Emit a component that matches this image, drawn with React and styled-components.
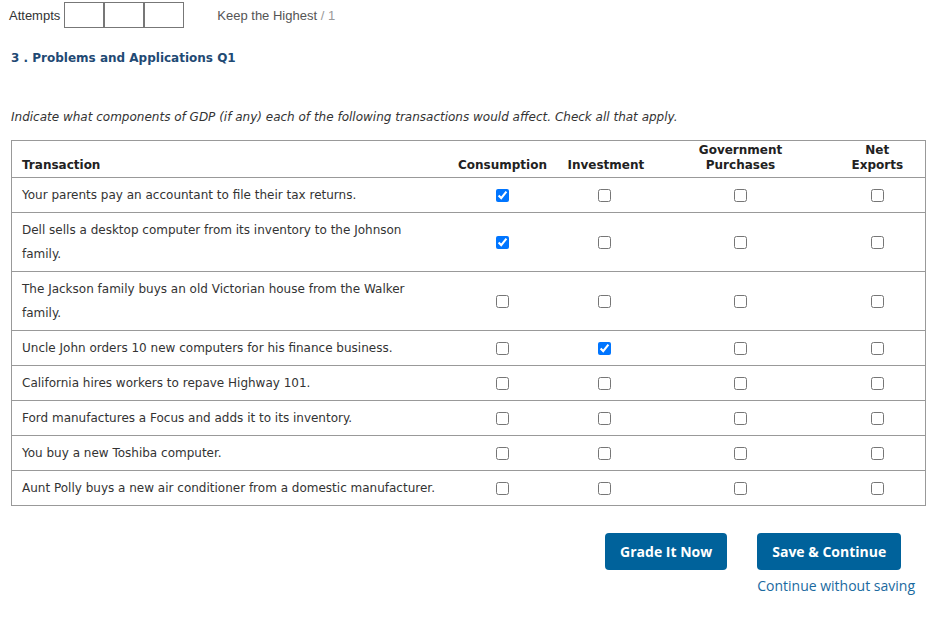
import React from 'react';
import styled, { createGlobalStyle } from 'styled-components';

const GlobalStyle = createGlobalStyle`
    body {
        margin: 0;
        background: #fff;
        font-family: 'DejaVu Sans', Verdana, sans-serif;
        color: #333;
    }
`

const rows = [
    { text: 'Your parents pay an accountant to file their tax returns.', checked: [true, false, false, false] },
    { text: 'Dell sells a desktop computer from its inventory to the Johnson family.', checked: [true, false, false, false] },
    { text: 'The Jackson family buys an old Victorian house from the Walker family.', checked: [false, false, false, false] },
    { text: 'Uncle John orders 10 new computers for his finance business.', checked: [false, true, false, false] },
    { text: 'California hires workers to repave Highway 101.', checked: [false, false, false, false] },
    { text: 'Ford manufactures a Focus and adds it to its inventory.', checked: [false, false, false, false] },
    { text: 'You buy a new Toshiba computer.', checked: [false, false, false, false] },
    { text: 'Aunt Polly buys a new air conditioner from a domestic manufacturer.', checked: [false, false, false, false] },
]

function App() {
    return (
        <Wrap>
            <GlobalStyle />
            <TopBar>
                <Label>Attempts</Label>
                <Boxes>
                    <Box />
                    <Box />
                    <Box />
                </Boxes>
                <Policy>Keep the Highest <Muted>/ 1</Muted></Policy>
            </TopBar>

            <Title>3 . Problems and Applications Q1</Title>

            <Prompt>Indicate what components of GDP (if any) each of the following transactions would affect. Check all that apply.</Prompt>

            <Table>
                <colgroup>
                    <col style={{ width: 436 }} />
                    <col style={{ width: 110 }} />
                    <col style={{ width: 94 }} />
                    <col style={{ width: 178 }} />
                    <col style={{ width: 96 }} />
                </colgroup>
                <thead>
                    <tr>
                        <Th align="left">Transaction</Th>
                        <Th>Consumption</Th>
                        <Th>Investment</Th>
                        <Th>Government<br />Purchases</Th>
                        <Th>Net<br />Exports</Th>
                    </tr>
                </thead>
                <tbody>
                    {rows.map((r, i) => (
                        <tr key={i}>
                            <Td>{r.text}</Td>
                            {r.checked.map((c, j) => (
                                <CheckCell key={j}>
                                    <Check type="checkbox" defaultChecked={c} />
                                </CheckCell>
                            ))}
                        </tr>
                    ))}
                </tbody>
            </Table>

            <Actions>
                <Button>Grade It Now</Button>
                <SaveGroup>
                    <Button>Save &amp; Continue</Button>
                    <Link href="#">Continue without saving</Link>
                </SaveGroup>
            </Actions>
        </Wrap>
    )
}

export default App

const Wrap = styled.div`
    padding: 2px 25px 0 11px;
`

const TopBar = styled.div`
    display: flex;
    align-items: center;
    margin-left: -2px;
    font-family: 'Liberation Sans', Arial, sans-serif;
    font-size: 13px;
`

const Label = styled.span`
    color: #333;
    margin-right: 4px;
`

const Boxes = styled.div`
    display: flex;
`

const Box = styled.div`
    width: 38px;
    height: 24px;
    border: 1px solid #777;
`

const Policy = styled.span`
    margin-left: 33px;
    color: #555;
`

const Muted = styled.span`
    color: #999;
`

const Title = styled.h2`
    margin: 23px 0 0;
    font-size: 12px;
    font-weight: bold;
    color: #1f4a74;
`

const Prompt = styled.p`
    margin: 45px 0 0;
    font-size: 12px;
    font-style: italic;
    color: #333;
`

const Table = styled.table`
    margin-top: 16px;
    width: 914px;
    border-collapse: collapse;
    border: 1px solid #999;
    table-layout: fixed;
    font-size: 12px;

    tr {
        border-bottom: 1px solid #999;
    }
`

const Th = styled.th`
    text-align: ${p => p.align || 'center'};
    vertical-align: bottom;
    padding: 2px 10px 4px;
    font-weight: bold;
    line-height: 15px;
    color: #222;
`

const Td = styled.td`
    padding: 5px 10px 5px;
    line-height: 24px;
    color: #333;
`

const CheckCell = styled.td`
    text-align: center;
    vertical-align: middle;
`

const Check = styled.input`
    margin: 0;
    width: 13px;
    height: 13px;
    vertical-align: middle;
    accent-color: #0075ff;
`

const Actions = styled.div`
    display: flex;
    justify-content: flex-end;
    gap: 30px;
    margin-top: 27px;
    padding-right: 10px;
`

const SaveGroup = styled.div`
    display: flex;
    flex-direction: column;
    align-items: flex-start;
`

const Button = styled.button`
    height: 37px;
    padding: 0 15px;
    border: none;
    border-radius: 4px;
    background: #00629b;
    color: #fff;
    font-family: 'Open Sans', sans-serif;
    font-weight: bold;
    font-size: 14px;
    cursor: pointer;
`

const Link = styled.a`
    margin-top: 6px;
    font-family: 'Open Sans', sans-serif;
    font-size: 14px;
    color: #1a6aa0;
    text-decoration: none;
`
